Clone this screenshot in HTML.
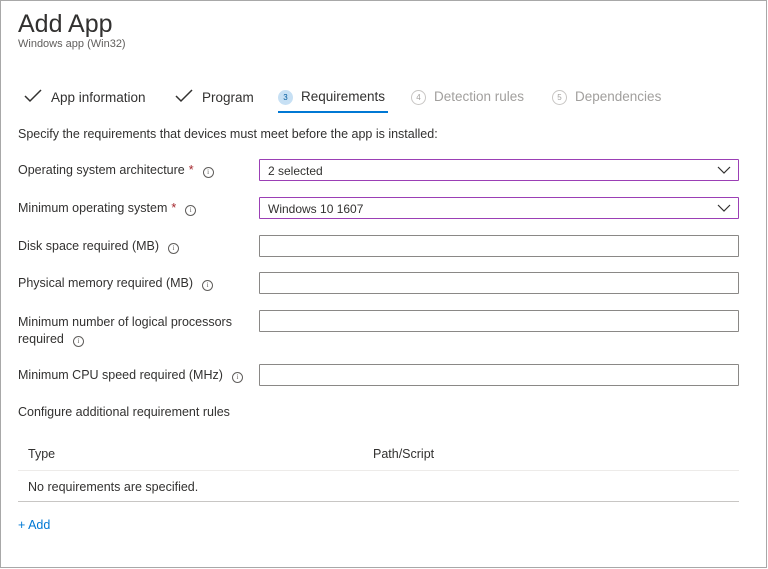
<!DOCTYPE html>
<html><head><style>
*{margin:0;padding:0;box-sizing:border-box}
body{width:768px;height:569px;background:#fff;font-family:"Liberation Sans",sans-serif;color:#323130;position:relative;overflow:hidden}
.frame{position:absolute;left:0;top:0;width:767px;height:568px;border:1px solid #a8a8a8}
.abs{position:absolute;white-space:nowrap}
.lbl{font-size:12.5px;color:#323130}
.inp{position:absolute;left:259px;width:480px;height:22px;border:1px solid #8a8886;border-radius:1px;background:#fff}
.sel{border:1px solid #9b3fb5}
.sel span{position:absolute;left:8px;top:4px;font-size:12px}
.chev{position:absolute;right:7px;top:5px}
.info{display:inline-block;width:11px;height:11px;border:1px solid #605e5c;border-radius:50%;font-size:7px;line-height:9px;text-align:center;color:#605e5c;vertical-align:0px;margin-left:9px;font-family:"Liberation Serif",serif}
.req{color:#a4262c;margin-left:4px}
.tab{position:absolute;top:89px;font-size:13.5px}
.num{display:inline-block;width:15px;height:15px;border-radius:50%;border:1px solid #c8c6c4;font-size:8px;line-height:13px;text-align:center;color:#a19f9d;vertical-align:1px;margin-right:8px}
</style></head><body>
<div class="frame"></div>
<div class="abs" style="left:18px;top:10px;font-size:25px;color:#323130">Add App</div>
<div class="abs" style="left:18px;top:38px;font-size:11px;color:#605e5c">Windows app (Win32)</div>

<div class="tab" style="left:24px"><svg width="18" height="14" style="vertical-align:-1px;margin-right:9px"><path d="M1 7 L6 12 L17 1" stroke="#323130" stroke-width="1.5" fill="none"/></svg>App information</div>
<div class="tab" style="left:175px"><svg width="18" height="14" style="vertical-align:-1px;margin-right:9px"><path d="M1 7 L6 12 L17 1" stroke="#323130" stroke-width="1.5" fill="none"/></svg>Program</div>
<div class="tab" style="left:278px"><span class="num" style="background:#c7e0f4;border-color:#c7e0f4;color:#005a9e">3</span>Requirements</div>
<div class="abs" style="left:278px;top:111px;width:110px;height:2px;background:#0078d4"></div>
<div class="tab" style="left:411px;color:#a19f9d"><span class="num">4</span>Detection rules</div>
<div class="tab" style="left:552px;color:#a19f9d"><span class="num">5</span>Dependencies</div>

<div class="abs lbl" style="left:18px;top:127px">Specify the requirements that devices must meet before the app is installed:</div>

<div class="abs lbl" style="left:18px;top:163px">Operating system architecture<span class="req">*</span><span class="info">i</span></div>
<div class="inp sel" style="top:159px"><span>2 selected</span><svg class="chev" width="14" height="10"><path d="M1 2 L7 8 L13 2" stroke="#323130" fill="none" stroke-width="1.2"/></svg></div>
<div class="abs lbl" style="left:18px;top:201px">Minimum operating system<span class="req">*</span><span class="info">i</span></div>
<div class="inp sel" style="top:197px"><span>Windows 10 1607</span><svg class="chev" width="14" height="10"><path d="M1 2 L7 8 L13 2" stroke="#323130" fill="none" stroke-width="1.2"/></svg></div>
<div class="abs lbl" style="left:18px;top:239px">Disk space required (MB)<span class="info">i</span></div>
<div class="inp" style="top:235px"></div>
<div class="abs lbl" style="left:18px;top:276px">Physical memory required (MB)<span class="info">i</span></div>
<div class="inp" style="top:272px"></div>
<div class="abs lbl" style="left:18px;top:314px;line-height:17px">Minimum number of logical processors<br>required<span class="info">i</span></div>
<div class="inp" style="top:310px"></div>
<div class="abs lbl" style="left:18px;top:368px">Minimum CPU speed required (MHz)<span class="info">i</span></div>
<div class="inp" style="top:364px"></div>

<div class="abs lbl" style="left:18px;top:405px">Configure additional requirement rules</div>
<div class="abs lbl" style="left:28px;top:447px">Type</div>
<div class="abs lbl" style="left:373px;top:447px">Path/Script</div>
<div class="abs" style="left:18px;top:470px;width:721px;height:1px;background:#edebe9"></div>
<div class="abs lbl" style="left:28px;top:480px">No requirements are specified.</div>
<div class="abs" style="left:18px;top:501px;width:721px;height:1px;background:#c8c6c4"></div>
<div class="abs lbl" style="left:18px;top:518px;color:#0078d4">+ Add</div>
</body></html>
